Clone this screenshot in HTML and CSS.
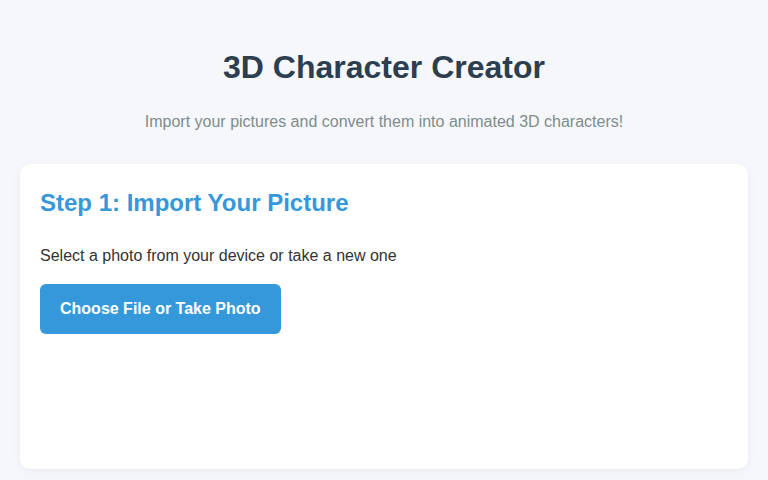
FILE: index.html
```html
<!DOCTYPE html>
<html lang="en">
<head>
<meta charset="utf-8">
<title>3D Character Creator</title>
<link rel="stylesheet" href="styles.css">
</head>
<body>
<div class="container">
  <header class="header">
    <h1 class="title">3D Character Creator</h1>
    <p class="subtitle">Import your pictures and convert them into animated 3D characters!</p>
  </header>
  <section class="card">
    <h2 class="step-title">Step 1: Import Your Picture</h2>
    <p class="step-text">Select a photo from your device or take a new one</p>
    <button class="btn" type="button">Choose File or Take Photo</button>
  </section>
</div>
</body>
</html>
```

FILE: styles.css
```css
* { box-sizing: border-box; }
html, body { margin: 0; }
body {
  background: #f5f7fa;
  font-family: "Liberation Sans", Arial, sans-serif;
  color: #333;
  line-height: 1.6;
}
.container {
  padding: 20px;
}
.header {
  text-align: center;
  margin-bottom: 30px;
}
.title {
  font-size: 32px;
  color: #2c3e50;
  margin: 21.5px 0 10px;
}
.subtitle {
  font-size: 16px;
  color: #7f8c8d;
  margin: 16px 0 0;
}
.card {
  background: #fff;
  border-radius: 10px;
  padding: 20px;
  min-height: 305px;
  box-shadow: 0 2px 10px rgba(0, 0, 0, 0.05);
}
.step-title {
  font-size: 24px;
  color: #3498db;
  margin: 0 0 20px;
}
.step-text {
  font-size: 16px;
  margin: 0 0 16px;
}
.btn {
  background: #3498db;
  color: #fff;
  border: none;
  border-radius: 6px;
  padding: 12px 20px;
  font-family: inherit;
  font-size: 16px;
  font-weight: bold;
  line-height: 1.6;
  cursor: pointer;
}
```
